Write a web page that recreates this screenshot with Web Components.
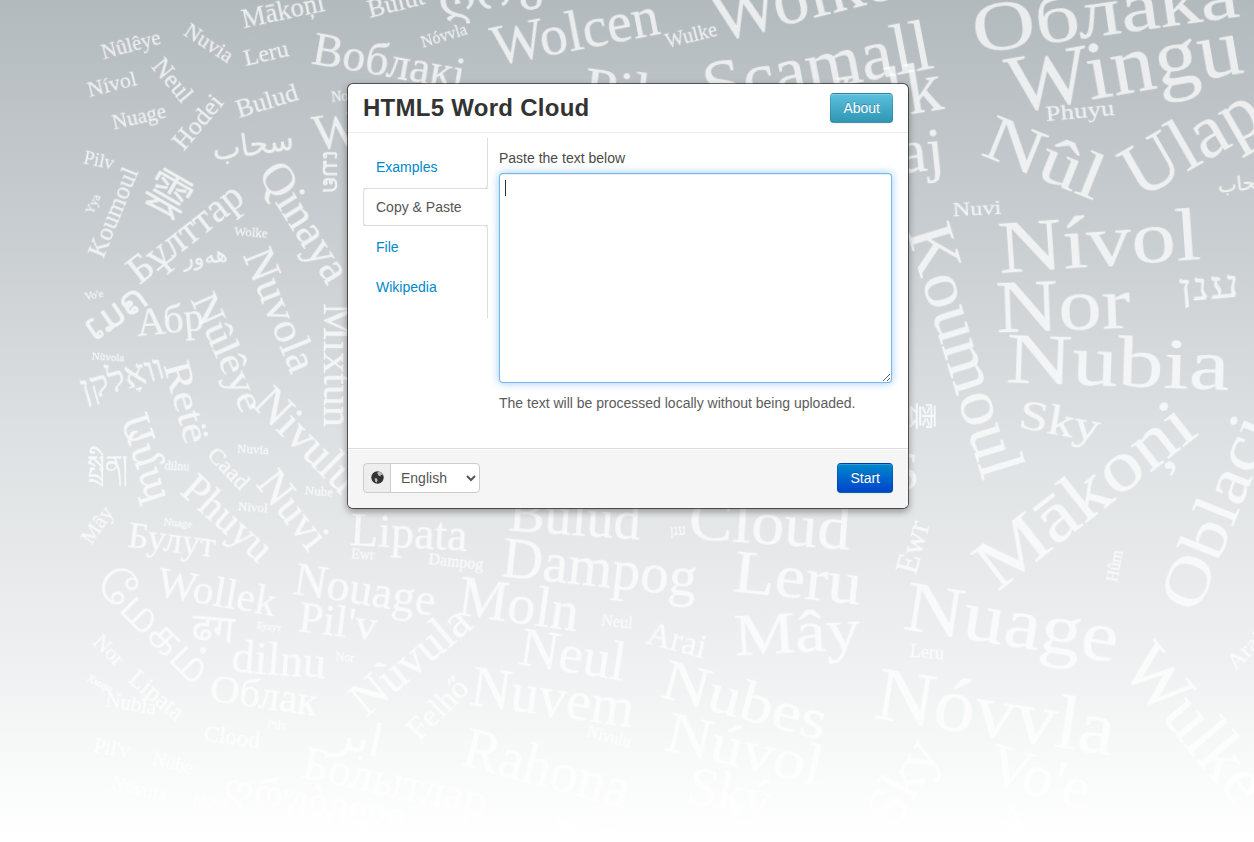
<!DOCTYPE html>
<html lang="en"><head><meta charset="utf-8"><title>HTML5 Word Cloud</title>
<style>
html,body{margin:0;height:100%;}
body{font:14px/20px "Liberation Sans",Arial,sans-serif;color:#333;overflow:hidden;background:#fff;}
</style></head>
<body>
<word-page>
  <cloud-dialog>
    <dialog-header slot="header">HTML5 Word Cloud</dialog-header>
    <side-tabs slot="nav"></side-tabs>
    <paste-pane slot="pane"></paste-pane>
    <dialog-footer slot="footer"></dialog-footer>
  </cloud-dialog>
</word-page>
<script>
const W=[
["Nûlêye",131,45,21,-15],["Nuvia",209,43,22,33],["Mākoņi",283,11,27,-12],["Bulut",396,3,26,-14],["Leru",266,53,24,-13],
["Nívol",112,84,22,-14],["Neul",173,80,25,50],["Nuage",139,117,21,-13],["Hodei",198,122,26,-50],["Bulud",267,101,26,-17],
["Воблакі",389,62,46,10],["Nóvvla",444,36,16,-17],["ღრუ",490,-6,44,-12],["Wolcen",575,31,56,-11],["Wulke",691,35,20,-14],["Wolke",802,-4,72,-14],
["Scamall",817,66,72,-11],["Pilv",632,92,54,7,1.1],["Wolk",865,97,72,-9],["aj",921,150,62,-6],
["Облака",1105,12,70,-8,1.25],["Wingu",1124,66,82,-10,1.08],["Phuyu",1080,111,20,-5,1.35],["Nûl",1045,157,66,22,1.25],["Ulap",1190,140,76,-30],["سحاب",1245,183,20,-6],
["Nuvi",977,209,18,-3,1.35],["Nívol",1099,241,74,-4,1.2],["ענן",1209,286,38,-5,1.4],["Nor",1063,305,74,-2,1.17],["Nubia",1118,362,72,2,1.27],["Sky",1060,421,42,10,1.25],
["Koumoul",966,350,66,73,1.05],["雲",921,416,28,90],["Mākoņi",1084,494,72,-38,1.15],["Oblaci",1216,512,64,-68,1.2],["Hûm",1115,566,16,-80],["S",905,472,52,0],["Ewr",912,547,32,-75],
["Pilv",99,160,19,12],["Yya",93,204,12,-65],["Koumoul",113,212,25,-68],["雲",168,195,46,30],["سحاب",253,145,30,-8],["Qinaya",305,222,46,58],
["Бұлттар",185,233,40,-38],["Wolke",251,232,13,4],["ھەور",205,257,22,-8],["Nuvola",280,310,44,68],["Mixtun",338,365,42,90],["Абр",170,320,40,-5],
["Nûlêye",228,352,38,66,1.15],["Vo'e",94,295,11,-10],["ເມຄ",115,312,38,-35],["Nùvola",108,357,11,3],["וואָלקן",122,378,36,-16],["Retë",187,402,38,75,1.2],
["Nivulu",307,440,46,45],["Ամպ",147,458,38,72],["སྤྲིན།",107,466,26,0],["dilnu",177,466,12,3],["Nuvia",253,449,13,3],["Caad",229,468,24,46],
["Phuyu",228,518,42,42],["Nuvi",293,510,44,52],["Nube",319,491,13,5],["Nivol",253,507,13,5],["Mây",97,525,22,-55],["Nuage",178,523,11,5],["Булут",172,540,36,7],
["No",340,97,14,-5],["W",336,130,50,-8],["ເມຄ",331,172,24,90],
["Lipata",409,533,46,3],["Bulud",575,517,54,4],["ענן",678,531,14,-3],["Cloud",770,523,62,4,1.07],["Ewr",363,555,14,3],["Dampog",456,562,16,6],["Dampog",600,567,57,6],["Leru",798,577,62,6,1.1],
["Wollek",217,592,42,10],["மேகம்",155,625,48,45],["Nouage",365,590,46,9],["Pil'v",338,622,44,7],["ढग",213,628,38,5],["Булут",269,627,10,7],["Moln",519,604,56,8],["Neul",617,622,16,6],
["dilnu",279,660,46,4],["Nor",345,657,12,6],["Nor",109,650,22,45],["Хмара",100,684,10,28],["Lipata",157,695,25,40],["Облак",264,695,41,8],["Neul",573,654,55,9],["Arai",677,640,34,15],["Mây",797,632,60,-3,1.15],
["Nùvula",410,660,48,-40],["Nuage",1012,622,72,9,1.15],["Leru",927,652,18,5],["Núvol",745,749,56,13,1.14],["Nubes",745,700,56,15,1.18],["Nuvem",553,697,56,8],["Felhő",437,708,32,-45],
["Nubia",131,704,21,10],["Clood",232,737,23,8],["Pilv",277,725,12,5],["Nóvvla",996,711,76,9,1.08],["Rahona",547,768,56,15],["Nivulu",609,737,16,15],["ابر",358,738,44,12],["Болытлар",395,782,46,12],
["Pil'v",112,748,20,10],["Nube",173,763,19,14],["Nùvula",139,789,19,14],["Nuvi",210,802,17,10],["ღრუბელი",315,802,36,10],["Nuvi",590,832,36,5],
["Ský",730,793,54,12],["Sky",902,782,58,-60],["Vo'e",1040,776,60,16],["Wulke",1196,724,70,50],["Arai",1245,650,24,-45],["Arai",990,835,42,-30]
];
function mk(name,html,extra){
  class C extends HTMLElement{
    constructor(){super();this.attachShadow({mode:"open"}).innerHTML=html;}
    connectedCallback(){extra&&extra.call(this);}
  }
  customElements.define(name,C);
}
mk("word-cloud",`<style>
:host{position:absolute;inset:0;overflow:hidden;display:block;
background:linear-gradient(180deg,#b3babd 0,#cacfd2 250px,#dfe2e4 450px,#ebedee 620px,#f6f7f7 740px,#fff 835px);}
span{position:absolute;white-space:nowrap;color:rgba(255,255,255,.72);transform:translate(-50%,-50%) rotate(var(--a)) scaleX(var(--s));
font-family:"Liberation Serif","Noto Sans CJK TC","DejaVu Serif","DejaVu Sans",serif;line-height:1;filter:blur(.3px);-webkit-text-stroke:.3px rgba(255,255,255,.55);}
</style><div id="c"></div>`,function(){
  const c=this.shadowRoot.getElementById("c");
  if(c.children.length)return;
  for(const [t,x,y,s,a,k] of W){const e=document.createElement("span");e.textContent=t;
    e.style.cssText=`left:${x}px;top:${y}px;font-size:${s}px;--a:${a}deg;--s:${k||1}`;c.append(e);}
});
mk("word-page",`<style>
:host{display:block;position:relative;height:842px;overflow:hidden;padding-top:83px;box-sizing:border-box;}
.fg{position:relative;margin-left:347px;width:562px;}
</style><word-cloud></word-cloud><div class="fg"><slot></slot></div>`);
mk("cloud-dialog",`<style>
:host{display:block;box-sizing:border-box;width:562px;height:426px;background:#fff;border:1px solid rgba(0,0,0,.55);border-radius:6px;
box-shadow:0 3px 7px rgba(0,0,0,.35);background-clip:padding-box;}
.shell{display:flex;flex-direction:column;height:100%;}
.body{flex:1;display:flex;padding:5px 15px 0;gap:11px;min-height:0;}
</style><div class="shell"><slot name="header"></slot><div class="body"><slot name="nav"></slot><slot name="pane"></slot></div><slot name="footer"></slot></div>`);
mk("ui-button",`<style>
:host{display:inline-flex;}
button{box-sizing:border-box;height:30px;padding:0 12px;font:14px/20px "Liberation Sans",Arial,sans-serif;color:#fff;border-radius:4px;cursor:pointer;
text-shadow:0 -1px 0 rgba(0,0,0,.25);border:1px solid rgba(0,0,0,.12);border-bottom-color:rgba(0,0,0,.25);box-shadow:inset 0 1px 0 rgba(255,255,255,.2),0 1px 2px rgba(0,0,0,.05);
background:linear-gradient(180deg,var(--from),var(--to));}
</style><button part="b"><slot></slot></button>`);
mk("dialog-header",`<style>
:host{display:flex;align-items:center;justify-content:space-between;box-sizing:border-box;height:49px;padding:0 15px;border-bottom:1px solid #eee;flex:none;}
h3{margin:0;font:bold 24px/30px "Liberation Sans",Arial,sans-serif;color:#333;letter-spacing:.27px;}
ui-button{--from:#5bc0de;--to:#2f96b4;}
</style><h3><slot></slot></h3><ui-button>About</ui-button>`);
mk("side-tabs",`<style>
:host{display:block;width:125px;flex:none;height:180px;box-sizing:border-box;font-size:14px;}
a{display:block;box-sizing:border-box;color:#0088cc;text-decoration:none;padding-left:13px;line-height:20px;border-right:1px solid #ddd;}
.ex{height:51px;padding-top:19px;border-bottom:1px solid #ddd;border-bottom-right-radius:4px;}
.ac{height:38px;margin-top:-1px;padding-top:8px;padding-left:12px;color:#555;background:#fff;border:1px solid #ddd;border-right:1px solid #fff;border-radius:4px 0 0 4px;margin-right:-1px;position:relative;z-index:1;}
.fi{height:42px;margin-top:-1px;padding-top:11px;border-top:1px solid #ddd;border-top-right-radius:4px;}
.wi{height:51px;padding-top:10px;}
</style><a class="ex" href="#">Examples</a><a class="ac" href="#">Copy &amp; Paste</a><a class="fi" href="#">File</a><a class="wi" href="#">Wikipedia</a>`);
mk("paste-pane",`<style>
:host{display:block;flex:1;min-width:0;color:#333;}
label{display:block;height:20px;margin:10px 0 5px;color:#4a4a4a;line-height:20px;}
.wrap{position:relative;width:393px;height:210px;}
textarea{display:block;box-sizing:border-box;width:393px;height:210px;margin:0;padding:4px 6px;resize:both;outline:0;background:#fff;
border:1px solid rgba(82,168,236,.8);border-radius:4px;box-shadow:inset 0 1px 1px rgba(0,0,0,.075),0 0 8px rgba(82,168,236,.6);font:14px/20px "Liberation Sans",Arial,sans-serif;}
.caret{position:absolute;left:6px;top:7px;width:1px;height:16px;background:#333;}
p{margin:10px 0 0;color:#5c5c5c;line-height:20px;}
</style><label>Paste the text below</label><div class="wrap"><textarea aria-label="Paste the text below"></textarea><i class="caret"></i></div><p>The text will be processed locally without being uploaded.</p>`);
mk("dialog-footer",`<style>
:host{display:flex;align-items:center;justify-content:space-between;box-sizing:border-box;height:60px;flex:none;padding:0 15px 2px;background:#f5f5f5;border-top:1px solid #ddd;border-radius:0 0 5px 5px;box-shadow:inset 0 1px 0 #fff;}
.group{display:flex;height:30px;}
.add{box-sizing:border-box;width:28px;display:flex;align-items:center;justify-content:center;background:#eee;border:1px solid #ccc;border-radius:4px 0 0 4px;}
select{box-sizing:border-box;width:90px;height:30px;margin:0 0 0 -1px;padding:0 0 0 6px;background:#fff;border:1px solid #ccc;border-radius:0 4px 4px 0;color:#555;font:14px/20px "Liberation Sans",Arial,sans-serif;outline:0;}
ui-button{--from:#0088cc;--to:#0044cc;}
svg{display:block}
</style><div class="group"><span class="add"><svg width="13" height="13" viewBox="0 0 13 13"><circle cx="6.5" cy="6.5" r="6.2" fill="#333"/><path d="M6.8 .6 10.4 1.6 12 4.2 9.8 3.8 9.4 5.4 7.6 4.6 6.4 2.6ZM3.6 7.2 6 7.6 6.6 9.2 5.6 11.8 4.2 10.6Z" fill="#bbb"/></svg></span>
<select aria-label="Language"><option>English</option></select></div><ui-button>Start</ui-button>`);
</script>
</body></html>
